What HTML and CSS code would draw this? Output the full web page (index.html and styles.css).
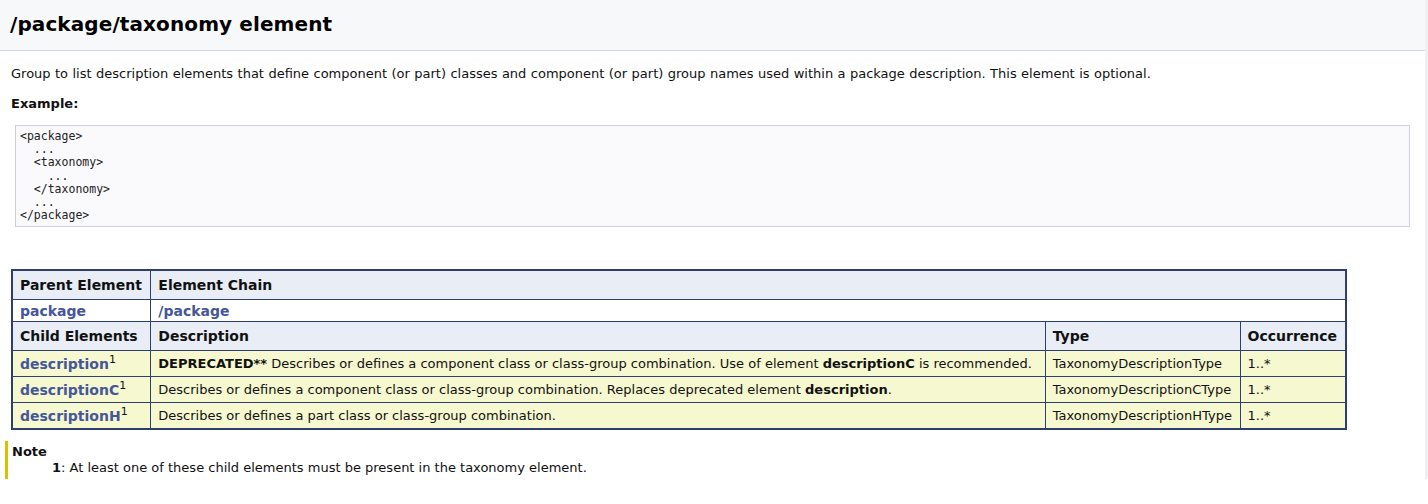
FILE: index.html
```html
<!DOCTYPE html>
<html>
<head>
<meta charset="utf-8">
<link rel="stylesheet" href="styles.css">
</head>
<body>
<div class="page">
  <header class="title-bar">
    <h1>/package/taxonomy element</h1>
  </header>
  <main class="content">
    <p class="intro">Group to list description elements that define component (or part) classes and component (or part) group names used within a package description. This element is optional.</p>
    <p class="example-label">Example:</p>
<pre class="code">&lt;package&gt;
  ...
  &lt;taxonomy&gt;
    ...
  &lt;/taxonomy&gt;
  ...
&lt;/package&gt;</pre>
    <table class="elements">
      <colgroup>
        <col class="c1"><col class="c2"><col class="c3"><col class="c4">
      </colgroup>
      <tr class="head">
        <th>Parent Element</th>
        <th colspan="3">Element Chain</th>
      </tr>
      <tr class="parent">
        <td><a class="link">package</a></td>
        <td colspan="3"><a class="link">/package</a></td>
      </tr>
      <tr class="head">
        <th>Child Elements</th>
        <th>Description</th>
        <th>Type</th>
        <th>Occurrence</th>
      </tr>
      <tr class="child">
        <td><a class="link">description</a><sup>1</sup></td>
        <td><b>DEPRECATED**</b> Describes or defines a component class or class-group combination. Use of element <b>descriptionC</b> is recommended.</td>
        <td>TaxonomyDescriptionType</td>
        <td>1..*</td>
      </tr>
      <tr class="child">
        <td><a class="link">descriptionC</a><sup>1</sup></td>
        <td>Describes or defines a component class or class-group combination. Replaces deprecated element <b>description</b>.</td>
        <td>TaxonomyDescriptionCType</td>
        <td>1..*</td>
      </tr>
      <tr class="child">
        <td><a class="link">descriptionH</a><sup>1</sup></td>
        <td>Describes or defines a part class or class-group combination.</td>
        <td>TaxonomyDescriptionHType</td>
        <td>1..*</td>
      </tr>
    </table>
  </main>
  <aside class="note">
    <div class="note-title">Note</div>
    <div class="note-body"><b>1</b>: At least one of these child elements must be present in the taxonomy element.</div>
  </aside>
</div>
<div class="scroll-track"></div>
</body>
</html>
```
FILE: styles.css
```css
html, body {
  margin: 0;
  padding: 0;
  background: #ffffff;
}
body {
  font-family: "DejaVu Sans", Verdana, sans-serif;
  font-size: 13px;
  color: #111111;
  display: flex;
}
.page {
  flex: 1;
  min-width: 0;
}
.scroll-track {
  width: 3px;
  background: #f0f0f2;
}
.title-bar {
  background: #f7f8fa;
  border-bottom: 1px solid #d0d4e0;
  height: 50px;
  display: flex;
  align-items: center;
  padding-left: 10px;
  box-sizing: content-box;
}
.title-bar h1 {
  margin: 0 0 3px 0;
  font-size: 20px;
  font-weight: bold;
  color: #000;
  letter-spacing: 0.1px;
}
.content {
  padding: 0 11px;
}
.intro {
  margin: 14px 0 0 0;
  line-height: 17px;
  word-spacing: 0.3px;
}
.example-label {
  margin: 13px 0 0 0;
  font-weight: bold;
  line-height: 17px;
}
.code {
  margin: 13px 4px 0 4px;
  background: #fafafc;
  border: 1px solid #ccd0dc;
  padding: 4px 4px 4px 4px;
  font-family: "DejaVu Sans Mono", "Liberation Mono", monospace;
  font-size: 11.5px;
  line-height: 13.2px;
  color: #222;
}
.elements {
  margin-top: 42px;
  border-collapse: collapse;
  width: 1336px;
  border: 2px solid #2e3f6e;
}
.elements col.c1 { width: 139px; }
.elements col.c2 { width: 895px; }
.elements col.c3 { width: 195px; }
.elements col.c4 { width: 106px; }
.elements th, .elements td {
  border: 1px solid #2e3f6e;
  text-align: left;
  padding: 0 7px;
  white-space: nowrap;
}
.elements th {
  background: #e8edf6;
  font-size: 14px;
  height: 28px;
  font-weight: bold;
}
.elements tr.parent td {
  background: #ffffff;
  height: 21px;
}
.elements tr.child td {
  background: #f6f8d0;
  height: 25px;
}
.link {
  color: #45569a;
  font-weight: bold;
  font-size: 14px;
}
sup {
  font-size: 11px;
  color: #111;
  vertical-align: 6px;
  line-height: 0;
}
.note {
  margin: 11px 0 0 5px;
  border-left: 3px solid #d6c300;
  padding: 3px 0 3px 4px;
}
.note-title {
  font-weight: bold;
  line-height: 16px;
}
.note-body {
  padding-left: 40px;
  line-height: 16px;
}
```
